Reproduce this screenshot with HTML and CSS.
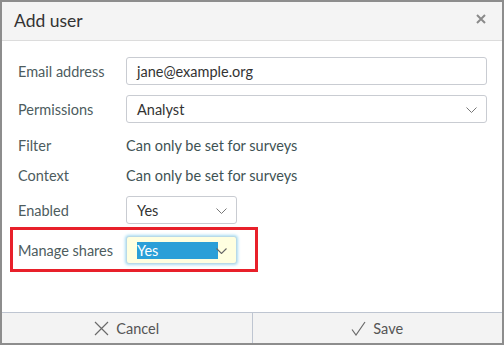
FILE: index.html
```html
<!DOCTYPE html>
<html>
<head>
<meta charset="utf-8">
<link rel="stylesheet" href="styles.css">
</head>
<body>
<div class="dialog">
  <div class="header">
    <span class="title">Add user</span>
    <svg class="close" width="10" height="10" viewBox="0 0 10 10"><path d="M1 1L9 9M9 1L1 9" stroke="#8a8a8a" stroke-width="2" fill="none"/></svg>
  </div>
  <div class="body">
    <div class="row r-email">
      <label class="label">Email address</label>
      <div class="input wide">jane@example.org</div>
    </div>
    <div class="row r-perm">
      <label class="label">Permissions</label>
      <div class="input select wide">Analyst
        <svg class="chev" width="11" height="6" viewBox="0 0 11 6"><path d="M0.5 0.5L5.5 5.5L10.5 0.5" stroke="#777" stroke-width="1" fill="none"/></svg>
      </div>
    </div>
    <div class="row r-text r-filter">
      <label class="label">Filter</label>
      <span class="value">Can only be set for surveys</span>
    </div>
    <div class="row r-text r-context">
      <label class="label">Context</label>
      <span class="value">Can only be set for surveys</span>
    </div>
    <div class="row r-enabled">
      <label class="label">Enabled</label>
      <div class="input select small">Yes
        <svg class="chev" width="11" height="6" viewBox="0 0 11 6"><path d="M0.5 0.5L5.5 5.5L10.5 0.5" stroke="#777" stroke-width="1" fill="none"/></svg>
      </div>
    </div>
    <div class="row r-manage">
      <label class="label">Manage shares</label>
      <div class="input select small focused"><span class="sel">Yes</span>
        <svg class="chev" width="11" height="6" viewBox="0 0 11 6"><path d="M0.5 0.5L5.5 5.5L10.5 0.5" stroke="#666" stroke-width="1.1" fill="none"/></svg>
      </div>
      <div class="highlight"></div>
    </div>
  </div>
  <div class="footer">
    <button class="btn">
      <svg width="15" height="15" viewBox="0 0 15 15"><path d="M1 1L14 14M14 1L1 14" stroke="#6a6a6a" stroke-width="1.2" fill="none"/></svg>
      <span>Cancel</span>
    </button>
    <button class="btn">
      <svg width="15" height="15" viewBox="0 0 15 15"><path d="M1 8.5L5 14L14 1" stroke="#6a6a6a" stroke-width="1.2" fill="none"/></svg>
      <span>Save</span>
    </button>
  </div>
</div>
</body>
</html>
```

FILE: styles.css
```css
* { box-sizing: border-box; }
html, body { margin: 0; padding: 0; background: #fff; }
body { font-family: Lato, "Open Sans", sans-serif; font-size: 14.5px; }

.dialog {
  width: 504px;
  height: 345px;
  border: 2px solid #8d8d8d;
  display: flex;
  flex-direction: column;
  background: #fff;
}

.header {
  height: 39px;
  flex: none;
  background: #f4f4f4;
  border-bottom: 1px solid #dcdcdc;
  display: flex;
  align-items: center;
  justify-content: space-between;
  padding: 0 16px 2px 12px;
}
.title { font-size: 17.5px; color: #333; }
.close { margin-top: -2px; }

.body {
  flex: 1;
  padding: 16px 15px 0 16px;
  color: #4a5a5c;
}

.row {
  display: flex;
  align-items: center;
  position: relative;
}
.label { width: 108px; flex: none; color: #4d5c5e; }
.value { color: #3e5254; }

.r-email { margin-bottom: 10px; }
.r-perm { margin-bottom: 10px; }
.r-text { height: 24px; }
.r-filter { margin-bottom: 6px; }
.r-context { margin-bottom: 9px; }
.r-enabled { margin-bottom: 12px; }

.input {
  height: 28px;
  border: 1px solid #c9ccd2;
  border-radius: 3px;
  padding: 0 10px;
  display: flex;
  align-items: center;
  color: #333;
  background: #fff;
  position: relative;
}
.wide { width: 361px; }
.small { width: 111px; }
.chev { position: absolute; right: 9px; top: 11px; }

.focused {
  background: #ffffe0;
  border-color: #b9d9e8;
  box-shadow: 0 0 3px 1px #a9dcf2;
}
.sel {
  background: #2a9fd8;
  color: #fff;
  width: 81px;
  height: 17px;
  line-height: 17px;
  margin-left: 0;
}

.highlight {
  position: absolute;
  left: -8px;
  top: -9px;
  width: 248px;
  height: 45px;
  border: 3px solid #e8202a;
}

.footer {
  height: 31px;
  flex: none;
  border-top: 1px solid #bec5d1;
  background: #f3f3f3;
  display: flex;
}
.btn {
  flex: 1;
  border: none;
  background: transparent;
  display: flex;
  align-items: center;
  justify-content: center;
  gap: 7px;
  font-family: Lato, "Open Sans", sans-serif;
  font-size: 14.5px;
  color: #555;
  padding: 0;
  margin: 0;
}
.btn + .btn { border-left: 1px solid #bec5d1; }
```
